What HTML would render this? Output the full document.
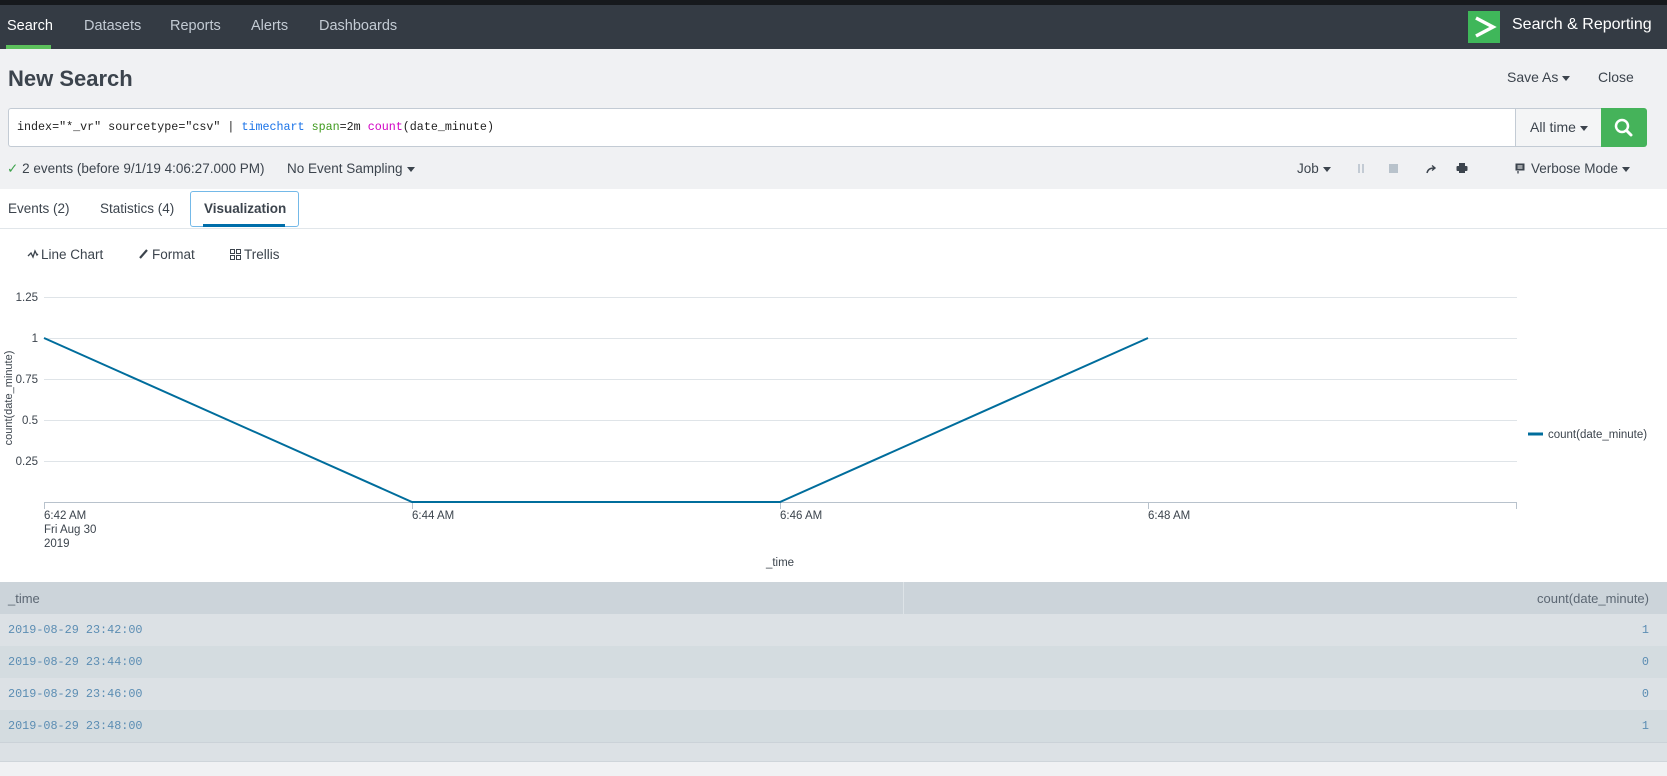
<!DOCTYPE html>
<html><head><meta charset="utf-8"><style>
*{margin:0;padding:0;box-sizing:border-box}
body{width:1667px;height:776px;background:#f0f1f3;font-family:"Liberation Sans",sans-serif;color:#3c444d;position:relative;overflow:hidden}
.a{position:absolute;white-space:nowrap}
.nav{position:absolute;left:0;top:0;width:1667px;height:49px;background:#343b44;border-top:5px solid #16191d}
.nav .a{color:#c3cbd4;font-size:14.5px;top:13px}
.mono{font-family:"Liberation Mono",monospace}
.caret{display:inline-block;width:0;height:0;border-left:4px solid transparent;border-right:4px solid transparent;border-top:5px solid #3c444d;vertical-align:middle;margin-left:4px}
.grid{stroke:#dfe4e8;stroke-width:1}
.row{position:absolute;left:0;width:1667px;height:32px}
.row .t{position:absolute;left:8px;top:9px;font-size:11.8px;color:#5b8db3;font-family:"Liberation Mono",monospace}
.row .v{position:absolute;right:18px;top:9px;font-size:11.8px;color:#5b8db3;font-family:"Liberation Mono",monospace}
</style></head><body>
<div class="nav">
<div class="a" style="left:7px;color:#fff">Search</div>
<div style="position:absolute;left:6px;top:40px;width:45px;height:4px;background:#5cc05c"></div>
<div class="a" style="left:84px">Datasets</div>
<div class="a" style="left:170px">Reports</div>
<div class="a" style="left:251px">Alerts</div>
<div class="a" style="left:319px">Dashboards</div>
<div style="position:absolute;left:1468px;top:6px;width:32px;height:32px;background:#3fb75a"></div>
<svg style="position:absolute;left:1468px;top:6px" width="32" height="32"><path d="M8 7 L25 16 L8 25" stroke="#fff" stroke-width="3.5" fill="none"/></svg>
<div class="a" style="left:1512px;top:11px;font-size:16px;color:#fff">Search &amp; Reporting</div>
</div>

<div class="a" style="left:8px;top:66px;font-size:22px;font-weight:bold;color:#3c444d">New Search</div>
<div class="a" style="left:1507px;top:69px;font-size:14px">Save As<span class="caret"></span></div>
<div class="a" style="left:1598px;top:69px;font-size:14px">Close</div>

<div style="position:absolute;left:8px;top:108px;width:1508px;height:39px;background:#fff;border:1px solid #c3cbd4;border-right:none;border-radius:3px 0 0 3px"></div>
<div class="a mono" style="left:17px;top:120px;font-size:11.7px;color:#222">index="*_vr" sourcetype="csv" | <span style="color:#1a73e8">timechart</span> <span style="color:#3f9a1e">span</span>=2m <span style="color:#d100c3">count</span>(date_minute)</div>
<div style="position:absolute;left:1515px;top:108px;width:87px;height:39px;background:#f4f5f6;border:1px solid #c3cbd4"></div>
<div class="a" style="left:1530px;top:119px;font-size:14px">All time<span class="caret"></span></div>
<div style="position:absolute;left:1601px;top:108px;width:46px;height:39px;background:#45b35a;border-radius:0 3px 3px 0"></div>
<svg style="position:absolute;left:1613px;top:117px" width="22" height="22"><circle cx="9" cy="9" r="6" stroke="#fff" stroke-width="2.5" fill="none"/><path d="M13.5 13.5 L18 18" stroke="#fff" stroke-width="3" stroke-linecap="round"/></svg>

<div class="a" style="left:7px;top:161px;font-size:13.5px"><span style="color:#3fa34d">✓</span> 2 events (before 9/1/19 4:06:27.000 PM)</div>
<div class="a" style="left:287px;top:161px;font-size:13.5px">No Event Sampling<span class="caret"></span></div>
<div class="a" style="left:1297px;top:161px;font-size:13.5px">Job<span class="caret"></span></div>
<div style="position:absolute;left:1358px;top:164px;width:2px;height:9px;background:#c3cbd4"></div>
<div style="position:absolute;left:1362px;top:164px;width:2px;height:9px;background:#c3cbd4"></div>
<div style="position:absolute;left:1389px;top:164px;width:9px;height:9px;background:#b8c2cb"></div>
<svg style="position:absolute;left:1425px;top:163px" width="12" height="12"><path d="M2 10 Q3 5 9 5 M7 2.5 L10 5 L7 7.5" stroke="#3c444d" stroke-width="1.4" fill="none"/></svg>
<svg style="position:absolute;left:1456px;top:162px" width="12" height="12"><rect x="3" y="1" width="6" height="3" fill="#3c444d"/><rect x="0.5" y="4" width="11" height="5" rx="1" fill="#3c444d"/><rect x="3" y="8" width="6" height="3" fill="#3c444d"/></svg>
<svg style="position:absolute;left:1515px;top:163px" width="11" height="11"><rect x="0.5" y="0.5" width="9" height="7" fill="#3c444d"/><path d="M2.5 3h5M2.5 5h5" stroke="#fff" stroke-width="1"/><path d="M3 8v2.5" stroke="#3c444d" stroke-width="1.3"/></svg>
<div class="a" style="left:1531px;top:161px;font-size:13.5px">Verbose Mode<span class="caret"></span></div>

<div style="position:absolute;left:0;top:189px;width:1667px;height:587px;background:#fff"></div>
<div class="a" style="left:8px;top:201px;font-size:13.5px">Events (2)</div>
<div class="a" style="left:100px;top:201px;font-size:13.5px">Statistics (4)</div>
<div style="position:absolute;left:190px;top:191px;width:109px;height:36px;border:1px solid #74b9e8;border-radius:3px;background:#fff"></div>
<div class="a" style="left:204px;top:201px;font-size:13.5px;font-weight:bold">Visualization</div>
<div style="position:absolute;left:203px;top:224px;width:82px;height:3px;background:#006eaa"></div>
<div style="position:absolute;left:0;top:228px;width:1667px;height:1px;background:#e1e6ea"></div>

<svg style="position:absolute;left:27px;top:248px" width="12" height="12"><path d="M1 8 L4 5 L6 9 L8 3 L10 7 L11 6" stroke="#3c444d" stroke-width="1.3" fill="none"/></svg>
<div class="a" style="left:41px;top:247px;font-size:13.5px">Line Chart</div>
<svg style="position:absolute;left:138px;top:248px" width="12" height="12"><path d="M2 10 L9 2" stroke="#3c444d" stroke-width="2.2"/></svg>
<div class="a" style="left:152px;top:247px;font-size:13.5px">Format</div>
<svg style="position:absolute;left:230px;top:249px" width="11" height="11"><rect x="0.5" y="0.5" width="4" height="4" fill="none" stroke="#3c444d"/><rect x="6.5" y="0.5" width="4" height="4" fill="none" stroke="#3c444d"/><rect x="0.5" y="6.5" width="4" height="4" fill="none" stroke="#3c444d"/><rect x="6.5" y="6.5" width="4" height="4" fill="none" stroke="#3c444d"/></svg>
<div class="a" style="left:244px;top:247px;font-size:13.5px">Trellis</div>

<svg style="position:absolute;left:0;top:0" width="1667" height="580" font-family="Liberation Sans, sans-serif" font-size="11.5" fill="#3c444d">
<line class="grid" x1="44" y1="297.5" x2="1517" y2="297.5"/>
<line class="grid" x1="44" y1="338.5" x2="1517" y2="338.5"/>
<line class="grid" x1="44" y1="379.5" x2="1517" y2="379.5"/>
<line class="grid" x1="44" y1="420.5" x2="1517" y2="420.5"/>
<line class="grid" x1="44" y1="461.5" x2="1517" y2="461.5"/>
<line x1="44" y1="502.5" x2="1517" y2="502.5" stroke="#b8c2cc"/>
<path d="M44.5 502v7M412.5 502v7M780.5 502v7M1148.5 502v7M1516.5 502v7" stroke="#b8c2cc"/>
<g text-anchor="end"><text x="38" y="301">1.25</text><text x="38" y="342">1</text><text x="38" y="383">0.75</text><text x="38" y="424">0.5</text><text x="38" y="465">0.25</text></g>
<text transform="translate(12,398) rotate(-90)" text-anchor="middle" font-size="11">count(date_minute)</text>
<text x="44" y="519">6:42 AM</text><text x="44" y="533">Fri Aug 30</text><text x="44" y="547">2019</text>
<text x="412" y="519">6:44 AM</text><text x="780" y="519">6:46 AM</text><text x="1148" y="519">6:48 AM</text>
<text x="780" y="566" text-anchor="middle">_time</text>
<polyline points="44,338 412,502 780,502 1148,338" fill="none" stroke="#006d9c" stroke-width="2"/>
<line x1="1528" y1="434" x2="1543" y2="434" stroke="#006d9c" stroke-width="3"/>
<text x="1548" y="438">count(date_minute)</text>
</svg>

<div style="position:absolute;left:0;top:582px;width:1667px;height:32px;background:#ccd4da"></div>
<div style="position:absolute;left:903px;top:582px;width:1px;height:32px;background:#dde3e7"></div>
<div class="a" style="left:8px;top:591px;font-size:13px;color:#5c6773">_time</div>
<div class="a" style="right:18px;top:591px;font-size:13px;color:#5c6773">count(date_minute)</div>
<div class="row" style="top:614px;background:#dce1e5"><span class="t">2019-08-29 23:42:00</span><span class="v">1</span></div>
<div class="row" style="top:646px;background:#d4dce0"><span class="t">2019-08-29 23:44:00</span><span class="v">0</span></div>
<div class="row" style="top:678px;background:#dce1e5"><span class="t">2019-08-29 23:46:00</span><span class="v">0</span></div>
<div class="row" style="top:710px;background:#d4dce0"><span class="t">2019-08-29 23:48:00</span><span class="v">1</span></div>
<div style="position:absolute;left:0;top:742px;width:1667px;height:20px;background:#dce1e5;border-top:1px solid #cbd2d8;border-bottom:1px solid #cfd5da"></div>
<div style="position:absolute;left:0;top:762px;width:1667px;height:14px;background:#f0f1f3"></div>
</body></html>
